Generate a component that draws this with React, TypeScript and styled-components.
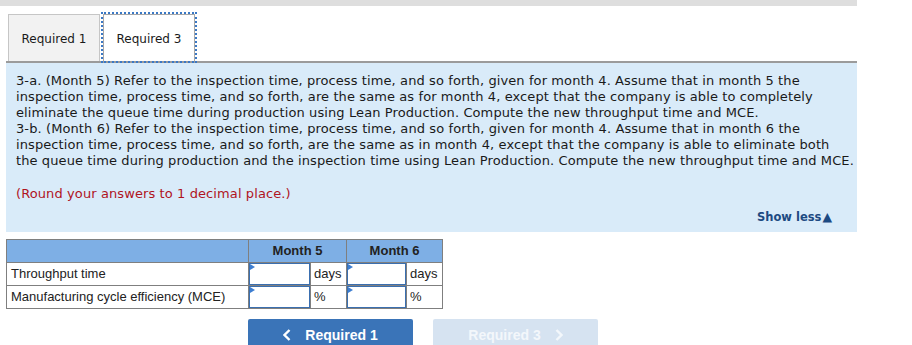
import styled, { createGlobalStyle } from "styled-components";

const GlobalStyle = createGlobalStyle`
  html, body {
    margin: 0;
    padding: 0;
    background: #ffffff;
  }
`;

const rows = [
  { label: "Throughput time", unit: "days" },
  { label: "Manufacturing cycle efficiency (MCE)", unit: "%" },
];

const ChevronIcon = ({ dir }: { dir: "left" | "right" }) => (
  <svg width="8" height="12" viewBox="0 0 8 12">
    <polyline
      points={dir === "left" ? "6.5,1 1.5,6 6.5,11" : "1.5,1 6.5,6 1.5,11"}
      fill="none"
      stroke="currentColor"
      strokeWidth="2.4"
    />
  </svg>
);

export default function App() {
  return (
    <>
      <GlobalStyle />
      <Page>
        <TopBar />
        <Content>
          <TabRow>
            <Tab>Required 1</Tab>
            <Tab $active>Required 3</Tab>
          </TabRow>
          <Panel>
            <Question>
              3-a. (Month 5) Refer to the inspection time, process time, and so forth, given for month 4. Assume that in month 5 the
              <br />
              inspection time, process time, and so forth, are the same as for month 4, except that the company is able to completely
              <br />
              eliminate the queue time during production using Lean Production. Compute the new throughput time and MCE.
              <br />
              3-b. (Month 6) Refer to the inspection time, process time, and so forth, given for month 4. Assume that in month 6 the
              <br />
              inspection time, process time, and so forth, are the same as in month 4, except that the company is able to eliminate both
              <br />
              the queue time during production and the inspection time using Lean Production. Compute the new throughput time and MCE.
            </Question>
            <Hint>(Round your answers to 1 decimal place.)</Hint>
            <ShowLessRow>
              <ShowLess>
                Show less<Arrow>&#9650;</Arrow>
              </ShowLess>
            </ShowLessRow>
          </Panel>

          <AnswerTable>
            <colgroup>
              <col style={{ width: 242 }} />
              <col style={{ width: 62 }} />
              <col style={{ width: 36 }} />
              <col style={{ width: 60 }} />
              <col style={{ width: 36 }} />
            </colgroup>
            <thead>
              <HeadRow>
                <HeadCell />
                <HeadCell colSpan={2}>Month 5</HeadCell>
                <HeadCell colSpan={2}>Month 6</HeadCell>
              </HeadRow>
            </thead>
            <tbody>
              {rows.map((r) => (
                <tr key={r.label}>
                  <LabelCell>{r.label}</LabelCell>
                  <InputCell>
                    <AnswerInput />
                  </InputCell>
                  <UnitCell>{r.unit}</UnitCell>
                  <InputCell>
                    <AnswerInput />
                  </InputCell>
                  <UnitCell>{r.unit}</UnitCell>
                </tr>
              ))}
            </tbody>
          </AnswerTable>

          <NavRow>
            <NavButton>
              <ChevronIcon dir="left" />
              Required 1
            </NavButton>
            <NavButton $disabled>
              Required 3
              <ChevronIcon dir="right" />
            </NavButton>
          </NavRow>
        </Content>
      </Page>
    </>
  );
}

const Page = styled.div`
  width: 857px;
  font-family: "DejaVu Sans", Verdana, sans-serif;
`;

const TopBar = styled.div`
  height: 6px;
  background: #dedede;
`;

const Content = styled.div`
  margin-left: 6px;
`;

const TabRow = styled.div`
  display: flex;
  align-items: flex-end;
  gap: 3px;
  padding: 8px 0 0 2px;
  border-bottom: 2px solid #9b9b9b;
`;

const Tab = styled.div<{ $active?: boolean }>`
  width: 92px;
  height: 47px;
  box-sizing: border-box;
  display: flex;
  align-items: center;
  justify-content: center;
  padding-top: 1px;
  font-size: 12px;
  color: #1a1a1a;
  border: 1px solid ${(p) => (p.$active ? "#a8a8a8" : "#c6c6c6")};
  border-bottom: none;
  background: ${(p) => (p.$active ? "#ffffff" : "#f2f2f2")};
  outline: ${(p) => (p.$active ? "2px dotted #3b78c4" : "none")};
  outline-offset: 0;
`;

const Panel = styled.div`
  background: #d9ebf9;
  padding: 10px 25px 7px 10px;
  height: 169px;
  box-sizing: border-box;
  display: flex;
  flex-direction: column;
`;

const Question = styled.div`
  font-size: 13px;
  line-height: 16px;
  letter-spacing: 0.1px;
  color: #1a1a1a;
  white-space: nowrap;
`;

const Hint = styled.div`
  margin-top: 17px;
  font-size: 13px;
  line-height: 16px;
  letter-spacing: 0.1px;
  color: #b0141e;
`;

const ShowLessRow = styled.div`
  margin-top: auto;
  display: flex;
  justify-content: flex-end;
`;

const ShowLess = styled.span`
  font-size: 11.5px;
  line-height: 16px;
  font-weight: bold;
  color: #1d4a82;
`;

const Arrow = styled.span`
  font-size: 12.5px;
  margin-left: 1px;
`;

const AnswerTable = styled.table`
  margin-top: 7px;
  border-collapse: collapse;
  table-layout: fixed;
  width: 437px;
  font-family: "Liberation Sans", Arial, sans-serif;
  font-size: 13px;
  line-height: 15px;
  color: #222222;
  border: 1px solid #7f7f7f;
`;

const HeadRow = styled.tr`
  height: 23px;
`;

const HeadCell = styled.th`
  padding: 0 0 2px;
  background: #7eafe5;
  border: 1px solid #7f7f7f;
  border-top: none;
  border-bottom: none;
  font-weight: bold;
  text-align: center;
  color: #222222;
`;

const LabelCell = styled.td`
  padding: 0 0 2px 4px;
  border: 1px solid #7f7f7f;
  white-space: nowrap;
`;

const InputCell = styled.td`
  padding: 0;
  border: 1px solid #7f7f7f;
  border-right: none;
`;

const UnitCell = styled.td`
  padding: 0 0 2px 3px;
  border: 1px solid #7f7f7f;
  white-space: nowrap;
`;

const AnswerInput = styled.div`
  position: relative;
  height: 22px;
  box-sizing: border-box;
  border: 1.5px solid #3a6fb0;
  background: #ffffff;
  &::before {
    content: "";
    position: absolute;
    left: 0;
    top: 0;
    border-top: 3px solid transparent;
    border-bottom: 3px solid transparent;
    border-left: 5px solid #3d7ed1;
  }
`;

const NavRow = styled.div`
  display: flex;
  gap: 20px;
  margin-top: 10px;
  padding-left: 242px;
`;

const NavButton = styled.div<{ $disabled?: boolean }>`
  width: 165px;
  height: 32px;
  border-radius: 2px;
  display: flex;
  align-items: center;
  justify-content: center;
  gap: 14px;
  font-family: "Liberation Sans", Arial, sans-serif;
  font-size: 14px;
  font-weight: bold;
  color: ${(p) => (p.$disabled ? "#f3f7fb" : "#ffffff")};
  background: ${(p) => (p.$disabled ? "#d6e3f1" : "#3a74b8")};
`;
